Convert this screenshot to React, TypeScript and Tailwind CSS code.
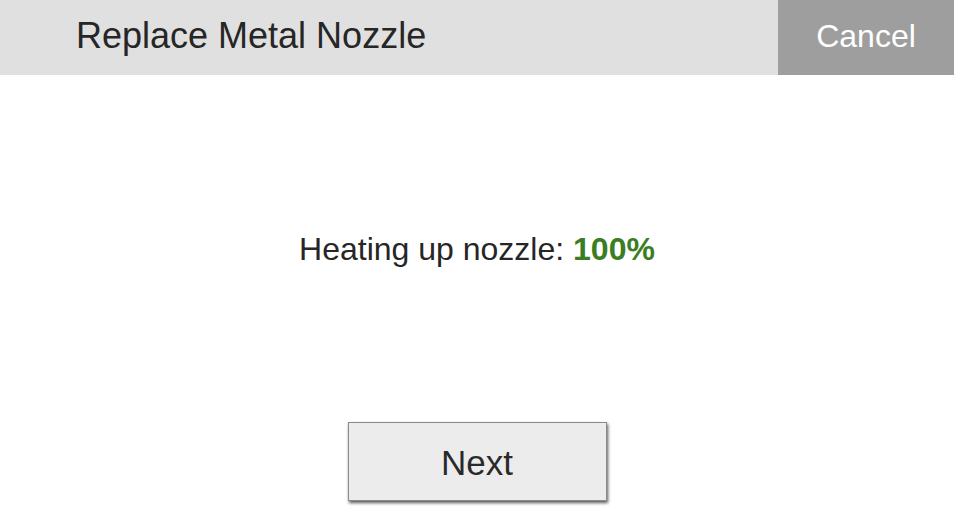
import React from 'react';

export default function App() {
  return (
    <div className="w-[954px] h-[520px] bg-white flex flex-col font-['Liberation_Sans',Arial,sans-serif] text-[#262626]">
      {/* Header */}
      <header className="h-[75px] bg-[#e0e0e0] flex items-stretch">
        <h1 className="flex-1 flex items-center pl-[76px] pb-[3px] text-[36px] font-normal">Replace Metal Nozzle</h1>
        <button className="w-[176px] bg-[#9e9e9e] text-white text-[32px] flex items-center justify-center pb-[4px]">
          Cancel
        </button>
      </header>

      <main className="flex-1 flex flex-col items-center">
        <p className="mt-[156px] text-[32px] leading-[37px]">
          Heating up nozzle: <span className="font-bold text-[#3a7d22]">100%</span>
        </p>
        <button className="mt-[154px] w-[259px] h-[79px] pt-[3px] bg-[#ececec] border border-[#8a8a8a] shadow-[1px_2px_3px_rgba(0,0,0,0.65)] text-[35px] text-[#2a2a2a]">
          Next
        </button>
      </main>
    </div>
  );
}
